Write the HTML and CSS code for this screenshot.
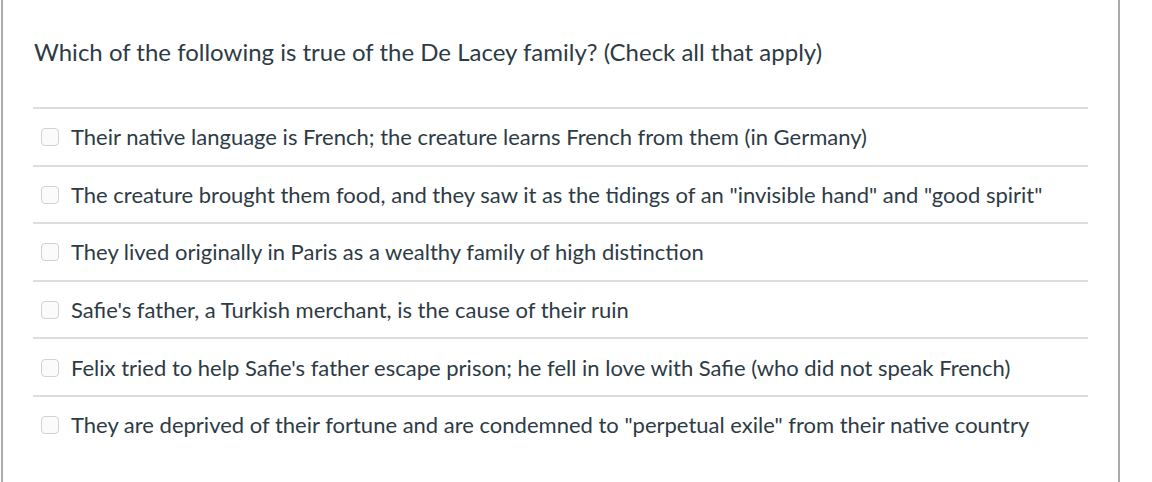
FILE: index.html
```html
<!DOCTYPE html>
<html>
<head>
<meta charset="utf-8">
<link rel="stylesheet" href="styles.css">
</head>
<body>
<div class="panel">
  <div class="question">Which of the following is true of the De Lacey family? (Check all that apply)</div>
  <div class="answers">
    <label class="answer"><span class="box"></span><span class="text">Their native language is French; the creature learns French from them (in Germany)</span></label>
    <label class="answer"><span class="box"></span><span class="text">The creature brought them food, and they saw it as the tidings of an "invisible hand" and "good spirit"</span></label>
    <label class="answer"><span class="box"></span><span class="text">They lived originally in Paris as a wealthy family of high distinction</span></label>
    <label class="answer"><span class="box"></span><span class="text">Safie's father, a Turkish merchant, is the cause of their ruin</span></label>
    <label class="answer"><span class="box"></span><span class="text">Felix tried to help Safie's father escape prison; he fell in love with Safie (who did not speak French)</span></label>
    <label class="answer"><span class="box"></span><span class="text">They are deprived of their fortune and are condemned to "perpetual exile" from their native country</span></label>
  </div>
</div>
</body>
</html>
```
FILE: styles.css
```css
html, body {
  margin: 0;
  padding: 0;
  background: #fff;
}
body {
  font-family: Lato, "Liberation Sans", sans-serif;
  color: #2d3b45;
}
.panel {
  margin-left: 1px;
  width: 1119px;
  height: 482px;
  box-sizing: border-box;
  border-left: 2px solid #aaaaaa;
  border-right: 2px solid #aaaaaa;
  padding: 0 30px 0 30px;
}
.question {
  box-sizing: border-box;
  height: 107px;
  padding: 37px 0 0 1px;
  font-size: 24px;
  line-height: 30px;
}
.answers {
  border-top: 2px solid #dddddd;
}
.answer {
  display: flex;
  align-items: center;
  height: 55.6px;
  border-bottom: 2px solid #dddddd;
  padding-left: 8px;
}
.answer:last-child {
  border-bottom: none;
}
.box {
  flex: none;
  width: 16px;
  height: 16px;
  border: 1px solid #d2d2d2;
  border-radius: 4px;
  background: #fbfbfb;
  margin-right: 12px;
  margin-top: 1px;
}
.text {
  font-size: 22px;
}
```
